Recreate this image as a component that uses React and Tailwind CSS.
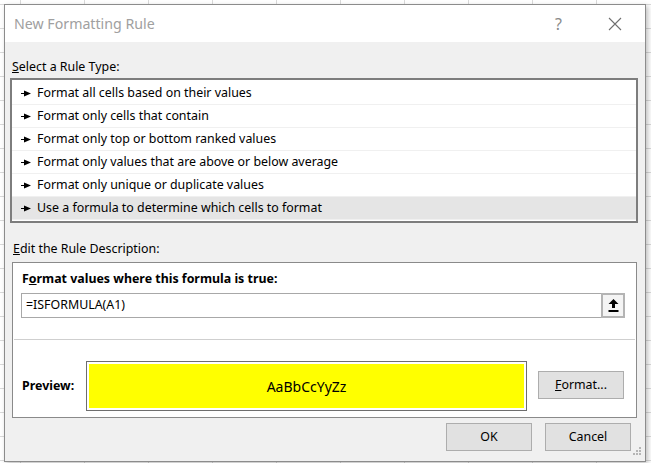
import React from "react";

const rules = [
  "Format all cells based on their values",
  "Format only cells that contain",
  "Format only top or bottom ranked values",
  "Format only values that are above or below average",
  "Format only unique or duplicate values",
  "Use a formula to determine which cells to format",
];

function Bullet() {
  return (
    <svg width="10" height="7" viewBox="0 0 10 7" className="shrink-0">
      <rect x="0" y="3" width="5" height="1" fill="#000" />
      <polygon points="3,0.5 10,3.5 3,6.5" fill="#000" />
    </svg>
  );
}

function RefIcon() {
  return (
    <svg width="11" height="13" viewBox="0 0 11 13">
      <polygon points="5.5,0 10.5,5 7,5 7,9 4,9 4,5 0.5,5" fill="#000" />
      <rect x="0.5" y="11" width="10" height="2" fill="#000" />
    </svg>
  );
}

function Grip() {
  return (
    <svg width="9" height="9" viewBox="0 0 9 9">
      <rect x="6" y="0" width="2" height="2" fill="#b5b5b5" />
      <rect x="3" y="3" width="2" height="2" fill="#b5b5b5" />
      <rect x="6" y="3" width="2" height="2" fill="#b5b5b5" />
      <rect x="0" y="6" width="2" height="2" fill="#b5b5b5" />
      <rect x="3" y="6" width="2" height="2" fill="#b5b5b5" />
      <rect x="6" y="6" width="2" height="2" fill="#b5b5b5" />
    </svg>
  );
}

function App() {
  return (
    <div className="w-[651px] h-[463px] overflow-hidden bg-white bg-[linear-gradient(to_right,#dadada_1px,transparent_1px),linear-gradient(to_bottom,#dadada_1px,transparent_1px)] bg-[size:64px_24px] bg-[position:20px_4px] pl-[4px] pt-[4px] font-['Noto_Sans',sans-serif] text-[12.4px] text-black">
      <div className="w-[642px] h-[458px] flex flex-col border border-[#8c8c8c] bg-[#f0f0f0] shadow-[2px_2px_5px_rgba(0,0,0,0.25)]">
        {/* title bar */}
        <div className="h-[37px] bg-white flex items-center pl-[9px] shrink-0">
          <span className="text-[14.2px] text-[#a0a0a0]">New Formatting Rule</span>
          <span className="ml-auto text-[16px] text-[#8a8a8a] mr-[46px]">?</span>
          <svg width="14" height="14" viewBox="0 0 14 14" className="mr-[23px]">
            <path d="M1 1 L13 13 M13 1 L1 13" stroke="#6f6f6f" strokeWidth="1.1" />
          </svg>
        </div>

        <div className="flex-1 flex flex-col px-[5px] pt-[17px]">
          <div className="pl-[2px] leading-[16px]">
            <span className="underline">S</span>elect a Rule Type:
          </div>
          <div className="mt-[3px] mr-[2px] border-2 border-[#7d7d7d] bg-white pt-[2px] pb-[1px]">
            {rules.map((r, i) => (
              <div
                key={r}
                className={
                  "h-[23px] flex items-center gap-[6px] pl-[9px] border-b border-[#f0f0f0] " +
                  (i === rules.length - 1 ? "bg-[#e5e5e5]" : "")
                }
              >
                <Bullet />
                <span>{r}</span>
              </div>
            ))}
          </div>

          <div className="mt-[18px] pl-[3px] leading-[16px]">
            <span className="underline">E</span>dit the Rule Description:
          </div>
          <div className="mt-[5px] mr-[3px] ml-[2px] h-[156px] border border-[#8a8a8a] bg-white flex flex-col">
            <div className="pl-[9px] pt-[8px] font-bold leading-[16px]">
              F<span className="underline">o</span>rmat values where this formula is true:
            </div>
            <div className="mt-[6px] ml-[8px] mr-[11px] h-[25px] flex border border-[#a8a8a8]">
              <div className="flex-1 flex items-center pl-[4px]">=ISFORMULA(A1)</div>
              <div className="w-[24px] flex items-center justify-center border-2 border-[#b4b4b4] bg-[#f4f4f4] -m-px">
                <RefIcon />
              </div>
            </div>
            <div className="mt-[21px] mx-px h-px bg-[#cfcfcf]" />
            <div className="flex items-center mt-[21px]">
              <span className="pl-[9px] w-[73px] font-bold">Preview:</span>
              <div className="w-[441px] h-[50px] border border-[#6e6e6e] p-[2px]">
                <div className="h-full bg-[#ffff00] flex items-center justify-center text-[14px]">AaBbCcYyZz</div>
              </div>
              <button className="ml-[11px] w-[86px] h-[28px] mt-[-2px] border border-[#adadad] bg-[#e1e1e1]">
                <span className="underline">F</span>ormat...
              </button>
            </div>
          </div>

          <div className="flex items-start mt-[5px]">
            <button className="ml-[436px] w-[86px] h-[28px] border border-[#adadad] bg-[#e1e1e1]">OK</button>
            <button className="ml-[13px] w-[86px] h-[28px] border border-[#adadad] bg-[#e1e1e1]">Cancel</button>
            <div className="ml-auto mt-[24px] mr-[-2px]">
              <Grip />
            </div>
          </div>
        </div>
      </div>
    </div>
  );
}

export default App;
